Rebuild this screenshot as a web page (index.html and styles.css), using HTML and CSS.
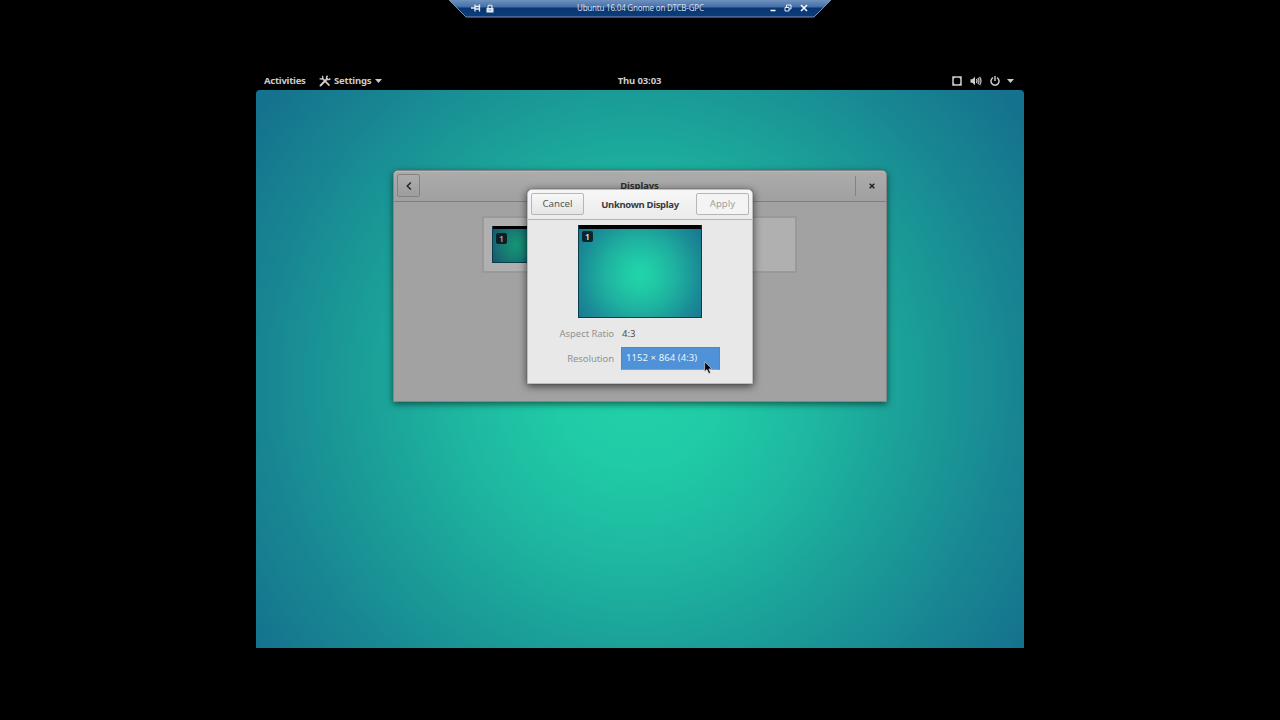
FILE: index.html
```html
<!DOCTYPE html>
<html lang="en">
<head>
<meta charset="utf-8">
<title>Ubuntu 16.04 Gnome on DTCB-GPC</title>
<link rel="stylesheet" href="styles.css">
</head>
<body>
<div class="screen">
  <header class="rdp">
    <svg class="rdp-shape" width="386" height="18" viewBox="0 0 386 18">
      <defs><linearGradient id="bar" x1="0" y1="0" x2="0" y2="1">
        <stop offset="0" stop-color="#7597c2"/><stop offset=".44" stop-color="#446fa9"/>
        <stop offset=".5" stop-color="#083672"/><stop offset="1" stop-color="#0c3d7c"/>
      </linearGradient></defs>
      <path d="M1 -1L19 17H367L385 -1Z" fill="url(#bar)" stroke="#7891b4"/>
    </svg>
    <div class="rdp-row">
      <div class="rdp-left">
        <svg width="10" height="10" viewBox="0 0 10 10"><path d="M0 5H4M4 1.500V8.500M4.500 3.500H8M4.500 6H8M8.500 1.500V8.500" stroke="#e8edf3" stroke-width="1.300" fill="none"/></svg>
        <svg width="8" height="9" viewBox="0 0 8 9"><path d="M2 4V2.500Q2 1 4 1T6 2.500V4" stroke="#e8edf3" stroke-width="1.200" fill="none"/><path d="M.5 4H7.500V8.500H.5Z" fill="#e8edf3"/><path d="M2.500 6H5.500" stroke="#8296b4"/></svg>
      </div>
      <span class="rdp-title">Ubuntu 16.04 Gnome on DTCB-GPC</span>
      <div class="rdp-right">
        <svg width="6" height="8" viewBox="0 0 6 8"><path d="M.5 6.500H5.500" stroke="#fff" stroke-width="1.500"/></svg>
        <svg width="8" height="8" viewBox="0 0 8 8"><path d="M2.500 3V1H7V5H5M1 3.500H5V7H1Z" stroke="#e8edf3" fill="none"/></svg>
        <svg width="8" height="8" viewBox="0 0 8 8"><path d="M1 1L7 7M7 1L1 7" stroke="#f4f6f9" stroke-width="1.600"/></svg>
      </div>
    </div>
  </header>

  <main class="session">
    <nav class="topbar">
      <div class="top-left">
        <span class="t-act">Activities</span>
        <span class="app">
          <svg width="12" height="12" viewBox="0 0 12 12"><path d="M1.500 10.500L8 4" stroke="#ccc" stroke-width="1.900" stroke-linecap="round"/><path d="M3.500 3.500L10 10.200" stroke="#ccc" stroke-width="1.700" stroke-linecap="round"/><path d="M8.600 .8Q6.800 2.600 8 4T11.400 3.600" fill="none" stroke="#ccc" stroke-width="1.400"/><path d="M.6 3.700Q2.600 4.400 3.500 3.500T3.300 .8" fill="none" stroke="#ccc" stroke-width="1.300"/></svg>
          <span class="t-set">Settings</span>
          <i class="caret"></i>
        </span>
      </div>
      <span class="clock">Thu 03:03</span>
      <div class="top-right">
        <svg width="10" height="10" viewBox="0 0 10 10"><path d="M1 1H9V9H1Z" fill="none" stroke="#ccc" stroke-width="1.500"/><path d="M1 6.500V9H3.500ZM9 6.500V9H6.500ZM1 3.500V1H3.500ZM9 3.500V1H6.500Z" fill="#ccc"/></svg>
        <svg width="12" height="10" viewBox="0 0 12 10"><path d="M.5 3.200H2.300L5 .8V9.200L2.300 6.800H.5Z" fill="#ccc"/><path d="M6.500 3Q7.700 5 6.500 7" fill="none" stroke="#ccc" stroke-width="1.400"/><path d="M8 1.800Q10 5 8 8.200M9.600 .8Q12.400 5 9.600 9.200" fill="none" stroke="#bbb" stroke-width="1.300"/></svg>
        <svg width="10" height="10" viewBox="0 0 10 10"><path d="M3 1.700A4 4 0 1 0 7 1.700" fill="none" stroke="#ccc" stroke-width="1.500"/><path d="M5 0V5" stroke="#ccc" stroke-width="1.400"/></svg>
        <i class="caret"></i>
      </div>
    </nav>
    <section class="desktop">
      <div class="window">
        <div class="win-head">
          <span class="back"><svg width="8" height="10" viewBox="0 0 8 10"><path d="M5.800 1.500L2.300 5L5.800 8.500" fill="none" stroke="#242424" stroke-width="1.500"/></svg></span>
          <span class="win-title">Displays</span>
          <span class="close"><svg width="6" height="6" viewBox="0 0 6 6"><path d="M.7 .7L5.300 5.300M5.300 .7L.7 5.300" stroke="#202020" stroke-width="1.500"/></svg></span>
        </div>
        <div class="win-body">
          <div class="list"><div class="preview small"><span class="num">1</span></div></div>
        </div>
      </div>
      <div class="dialog">
        <div class="dlg-head">
          <span class="btn">Cancel</span>
          <span class="dlg-title">Unknown Display</span>
          <span class="btn off">Apply</span>
        </div>
        <div class="dlg-body">
          <div class="preview"><span class="num">1</span></div>
          <div class="fields">
            <span class="label t-asp">Aspect Ratio</span><span class="value">4:3</span>
            <span class="label t-res">Resolution</span><span class="combo">1152 × 864 (4:3)</span>
          </div>
        </div>
      </div>
      <svg class="cursor" width="9" height="14" viewBox="0 0 9 14"><path d="M.7 .8V10.500L3 8.500L4.800 12.500L6.500 11.700L4.800 7.900H8Z" fill="#050505" stroke="#ddd" stroke-width=".6"/></svg>
    </section>
  </main>
</div>
</body>
</html>
```

FILE: styles.css
```css
* { box-sizing: border-box; }
body { margin: 0; background: #000; font-family: "Noto Sans", "Open Sans", sans-serif; }
svg { display: block; flex: none; }
.screen { width: 1280px; height: 720px; background: #000; overflow: hidden; display: flex; flex-direction: column; align-items: center; }

.rdp { position: relative; width: 386px; height: 18px; margin-bottom: 54px; }
.rdp-shape { position: absolute; left: 0; top: 0; }
.rdp-row { position: relative; height: 16px; padding: 0 25px 0 24px; display: flex; align-items: center; justify-content: space-between; }
.rdp-left { display: flex; gap: 5px; align-items: center; }
.rdp-right { display: flex; gap: 8px; align-items: center; }
.rdp-title { font-size: 8px; line-height: 16px; color: #d5deea; white-space: nowrap; width: 126px; margin-left: 16px; letter-spacing: -.21px; }

.session { width: 768px; height: 576px; display: flex; flex-direction: column; }
.topbar { height: 18px; padding: 0 10px 0 8px; display: grid; grid-template-columns: 1fr auto 1fr; align-items: center; color: #ccc; font-size: 9.5px; font-weight: 700; line-height: 18px; white-space: nowrap; }
.top-left, .top-right, .app { display: flex; align-items: center; }
.top-left { gap: 13px; }
.app { gap: 3px; }
.t-act { width: 42px; letter-spacing: -.25px; }
.t-set { width: 38px; letter-spacing: -.2px; }
.clock { letter-spacing: -.12px; padding-left: 1px; }
.top-right { justify-content: flex-end; gap: 8px; }
.top-right .caret { margin-left: -1px; }
.caret { width: 7px; height: 4px; background: #ccc; clip-path: polygon(0 0, 100% 0, 50% 100%); }

.desktop { position: relative; flex: 1; border-radius: 4px 4px 0 0; background: radial-gradient(circle at 382px 292px, #21d0a8 0, #20cca7 80px, #1eb7a0 180px, #1ba199 265px, #188692 375px, #15728e 465px); }

.window { position: absolute; left: 137px; top: 80px; width: 494px; height: 232px; border: 1px solid #858585; border-radius: 5px 5px 0 0; background: #a2a2a2; box-shadow: 0 2px 7px rgba(0,0,0,.55); display: flex; flex-direction: column; }
.win-head { height: 31px; padding: 0 4px 1px 3px; border-bottom: 1px solid #7f7f7f; border-radius: 4px 4px 0 0; background: linear-gradient(#acacac, #a0a0a0); box-shadow: inset 0 1px #b8b8b8; display: flex; align-items: center; justify-content: space-between; }
.back { width: 23px; height: 23px; border: 1px solid #828282; border-radius: 2px; background: linear-gradient(#adadad, #9d9d9d); display: flex; align-items: center; justify-content: center; }
.win-title { font-size: 9.5px; line-height: 14px; font-weight: 700; color: #303030; margin-left: 4px; padding-top: 1px; letter-spacing: -.1px; }
.close { width: 27px; height: 20px; border-left: 1px solid #828282; display: flex; align-items: center; justify-content: center; padding-left: 6px; }
.win-body { padding-top: 14px; display: flex; justify-content: center; }
.list { width: 315px; height: 57px; border: 2px solid #999; background: #b0b0b0; padding: 8px; margin-right: 1px; }

.preview { width: 124px; height: 93px; border: solid #0a3c4a; border-width: 0 1px 1px; padding: 6px 0 0 3px; background: linear-gradient(#000 0 4px, transparent 4px), radial-gradient(circle at 50% 54%, #22d5aa 0, #20c9a6 16px, #1eae9f 38px, #1a8b96 60px, #177592 78px); flex: none; }
.preview.small { width: 48px; height: 37px; padding: 7px 0 0 3px; background: linear-gradient(#000 0 3px, transparent 3px), radial-gradient(circle at 50% 54%, #159572 0, #178073 12px, #176671 22px, #155369 30px); }
.num { display: block; width: 11px; height: 11px; border-radius: 2px; background: #08272c; color: #e4e8e8; font-size: 8.5px; line-height: 11px; text-align: center; font-weight: 600; }
.small .num { color: #aaa; background: #0b2024; }

.dialog { position: absolute; left: 271px; top: 99px; width: 226px; height: 195px; border: 1px solid #bcbcbc; border-radius: 5px 5px 0 0; background: #e8e8e8; box-shadow: 0 2px 9px rgba(0,0,0,.65), 0 0 1px rgba(0,0,0,.5); display: flex; flex-direction: column; }
.dlg-head { height: 30px; padding: 0 3px 1px; border-bottom: 1px solid #b2b2b2; border-radius: 4px 4px 0 0; background: linear-gradient(#f7f7f7, #ebebeb); display: flex; align-items: center; justify-content: space-between; }
.btn { width: 53px; height: 22px; border: 1px solid #b6b6b6; border-radius: 2px; background: linear-gradient(#f8f8f8, #e5e5e5); color: #555; font-size: 9.7px; line-height: 19px; text-align: center; }
.btn.off { background: #f4f4f4; color: #a0a0a0; }
.dlg-title { font-size: 9.5px; font-weight: 700; color: #3c3c3c; letter-spacing: -.33px; white-space: nowrap; padding-top: 1px; }
.dlg-body { padding-top: 5px; display: flex; flex-direction: column; align-items: center; }
.fields { align-self: stretch; display: grid; grid-template-columns: 87px 99px; grid-template-rows: 23px 23px; column-gap: 6px; row-gap: 2px; padding-top: 4px; align-items: center; font-size: 9.5px; line-height: 14px; }
.label { padding-right: 1px; text-align: right; color: #929292; white-space: nowrap; letter-spacing: -.06px; }
.value { color: #484848; padding-left: 1px; }
.combo { height: 23px; border: 1px solid #4a87cb; border-bottom-color: #9c9c9c; background: #4f92d7; color: #edf4fb; padding: 0 4px; line-height: 20px; white-space: nowrap; letter-spacing: .08px; }
.cursor { position: absolute; left: 448px; top: 271px; }
```
